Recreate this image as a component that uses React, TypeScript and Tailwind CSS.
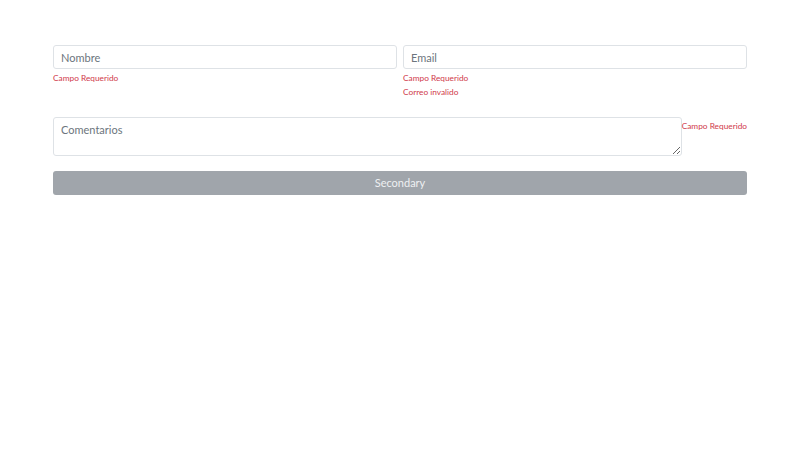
export default function App() {
  return (
    <div className="min-h-[450px] bg-white pt-[45px] font-['Lato','Noto_Sans',sans-serif]">
      <form className="mx-[53px] w-[694px]">
        <div className="flex gap-[6px]">
          <div className="flex-1">
            <input
              placeholder="Nombre"
              className="block h-[24px] w-full rounded-[3px] border border-[#dee2e6] px-[7px] text-[11px] text-[#212529] placeholder:text-[#6c757d] outline-none"
            />
            <p className="mt-[2px] text-[8.3px] leading-[14px] text-[#d03a4b]">Campo Requerido</p>
          </div>
          <div className="flex-1">
            <input
              placeholder="Email"
              className="block h-[24px] w-full rounded-[3px] border border-[#dee2e6] px-[7px] text-[11px] text-[#212529] placeholder:text-[#6c757d] outline-none"
            />
            <p className="mt-[2px] text-[8.3px] leading-[14px] text-[#d03a4b]">Campo Requerido</p>
            <p className="text-[8.3px] leading-[14px] text-[#d03a4b]">Correo invalido</p>
          </div>
        </div>

        <div className="mt-[18px] flex items-start">
          <textarea
            placeholder="Comentarios"
            className="block h-[39px] flex-1 rounded-[3px] border border-[#dee2e6] px-[7px] py-[3px] text-[11px] leading-[17px] text-[#212529] placeholder:text-[#6c757d] outline-none"
          />
          <p className="mt-[2px] text-[8.3px] leading-[14px] text-[#d03a4b]">Campo Requerido</p>
        </div>

        <button
          type="button"
          disabled
          className="mt-[15px] block h-[24px] w-full rounded-[3px] bg-[#a0a5ab] text-[11px] text-[#eef0f2]"
        >
          Secondary
        </button>
      </form>
    </div>
  )
}
